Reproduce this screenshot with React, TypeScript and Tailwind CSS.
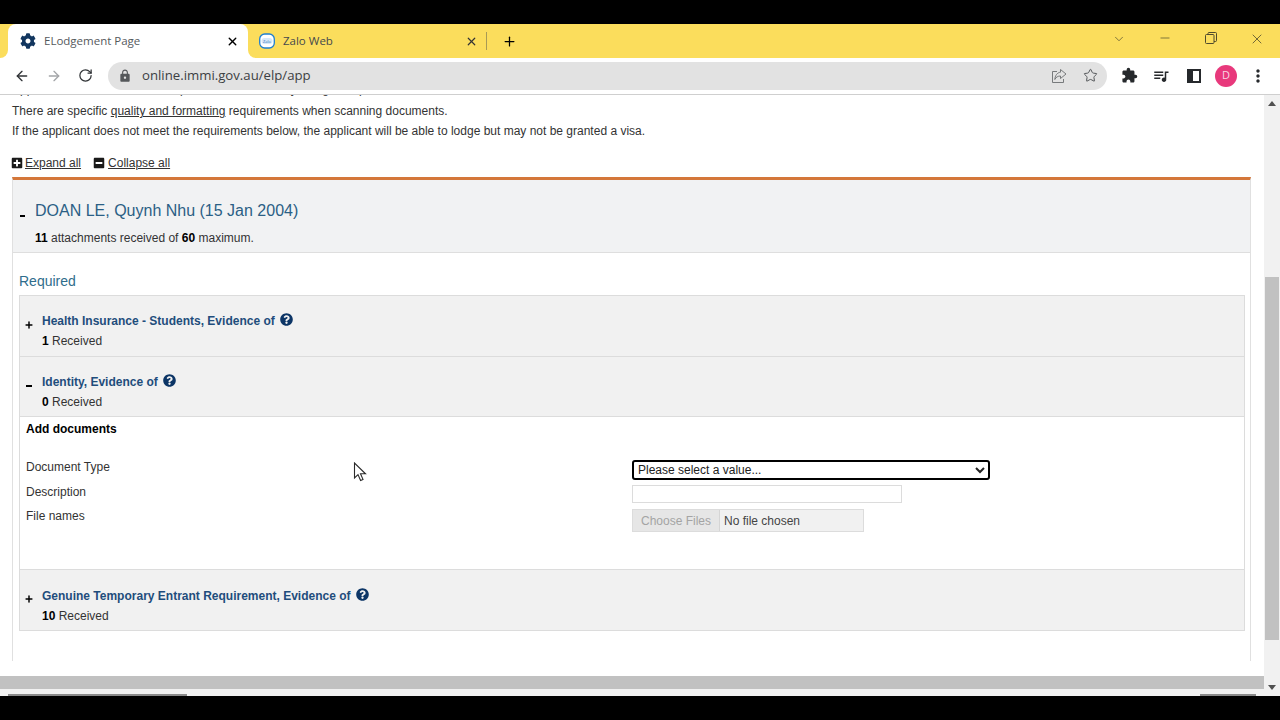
import { ArrowLeft, ArrowRight, ChevronDown, Minus, Plus, RotateCw, Star, X } from "lucide-react";
import { FaCog, FaMinusSquare, FaPlusSquare, FaQuestionCircle } from "react-icons/fa";
import { MdExtension, MdLock, MdMoreVert, MdQueueMusic } from "react-icons/md";

const CHROME_FONT = "font-['Open_Sans','Noto_Sans',sans-serif]";

function Help() {
  return <FaQuestionCircle className="ml-[5px] mt-[-2px] inline-block text-[13px] text-[#0c3566]" />;
}

function Req({
  open,
  title,
  count,
  className,
  bodyClass = "pt-4",
}: {
  open?: boolean;
  title: string;
  count: number;
  className: string;
  bodyClass?: string;
}) {
  return (
    <div className={`flex bg-[#f1f1f1] pl-[6px] ${className}`}>
      <span className="mt-5 flex w-4 shrink-0 items-start text-black">
        <span className="-ml-px mt-[3px] flex h-[9px] w-[7px] items-center justify-center">
          {open ? (
            <span className="mt-[2px] h-[2px] w-[6px] bg-black" />
          ) : (
            <Plus size={10} strokeWidth={3.5} className="mt-[2px] shrink-0" />
          )}
        </span>
      </span>
      <div className={bodyClass}>
        <div className="flex h-[17px] items-center text-xs font-bold text-[#1f4d7c]">
          {title}
          <Help />
        </div>
        <div className="mt-[4px] text-xs text-[#333]">
          <b className="text-black">{count}</b> Received
        </div>
      </div>
    </div>
  );
}

function TabBar() {
  return (
    <div className={`flex h-[34px] bg-white text-xs ${CHROME_FONT}`}>
      <div className="w-2 shrink-0 rounded-br-lg bg-[#fbdd5c]" />
      <div className="h-[34px] w-[240px] shrink-0 bg-[#fbdd5c]">
        <div className="flex h-[34px] items-center rounded-t-lg bg-white pl-[12px] pr-[9px] text-[#55595d]">
          <FaCog className="text-[16px] text-[#12365f]" />
          <span className="ml-[8px] flex-1 text-[11.5px]">ELodgement Page</span>
          <X size={13} strokeWidth={2.5} className="text-black" />
        </div>
      </div>
      <div className="flex h-[34px] flex-1 rounded-bl-lg bg-[#fbdd5c]">
        <div className="flex h-[34px] w-[238px] shrink-0 items-center pl-[11px] pr-2 text-[#45494d]">
          <svg viewBox="0 0 16 16" className="h-4 w-4">
            <rect x="0.7" y="1" width="14.6" height="14" rx="5" fill="#fff" stroke="#1f7fd0" strokeWidth="1.3" />
            <rect x="2.5" y="5" width="11" height="6" rx="3" fill="#d7e8f8" />
            <text x="8" y="9.6" textAnchor="middle" fontSize="4" fill="#1f6fc0">Zalo</text>
          </svg>
          <span className="ml-2 flex-1 text-[11.5px]">Zalo Web</span>
          <X size={13} strokeWidth={2.2} className="text-[#333]" />
        </div>
        <div className="my-[8px] h-[18px] w-px bg-[#a89a55]" />
        <div className="ml-[15px] flex items-center text-black">
          <Plus size={15} strokeWidth={2} />
        </div>
        <div className="ml-auto flex items-start text-[#4f4a2c]">
          <ChevronDown size={14} strokeWidth={1.2} className="mt-[8px] mr-[32px]" />
          <Minus size={14} strokeWidth={1.2} className="mt-[7px] mr-[33px]" />
          <svg viewBox="0 0 12 12" className="mr-[32px] mt-[8px] h-[12px] w-[12px]" fill="none" stroke="currentColor">
            <rect x="0.5" y="2.5" width="8.5" height="9" rx="1" />
            <path d="M3 2.5V1.5a1 1 0 0 1 1-1h6.5a1 1 0 0 1 1 1v7a1 1 0 0 1-1 1H9" />
          </svg>
          <X size={16} strokeWidth={1.2} className="mr-[15px] mt-[7px]" />
        </div>
      </div>
    </div>
  );
}

function Toolbar() {
  return (
    <div className={`flex h-[37px] items-center border-b border-[#cfcfcf] bg-white pb-[1px] pl-[14px] ${CHROME_FONT}`}>
      <ArrowLeft size={16} strokeWidth={2} className="text-[#303336]" />
      <ArrowRight size={16} strokeWidth={2} className="ml-4 text-[#a3a5a8]" />
      <RotateCw size={15} strokeWidth={2} className="ml-4 text-[#303336]" />
      <div className="ml-[15px] flex h-7 w-[999px] items-center rounded-full bg-[#e2e2e2] pl-[10px] pr-[9px]">
        <MdLock className="text-[14px] text-[#55585b]" />
        <span className="ml-[10px] mt-px flex-1 text-[13.2px] text-[#3c4043]">online.immi.gov.au/elp/app</span>
        <svg viewBox="0 0 16 16" className="mr-4 h-4 w-4" fill="none" stroke="#6b6e71" strokeWidth="0.9">
          <path d="M6 3.5H1.5V14.5H12.5V11" />
          <path d="M9.5 1.5L15 6L9.5 10.5V8C7 8 5 9 3.8 11.5C4 8 6 4.5 9.5 4.2Z" />
        </svg>
        <Star size={15} strokeWidth={1.6} className="text-[#55585b]" />
      </div>
      <MdExtension className="ml-[14px] text-[17px] text-[#26292c]" />
      <MdQueueMusic className="ml-[14px] text-[18px] text-[#26292c]" />
      <div className="ml-[17px] flex h-[14px] w-[14px] justify-end border-2 border-[#26292c] bg-[#26292c]">
        <span className="h-full w-[6px] bg-white" />
      </div>
      <span className="ml-[14px] flex h-[22px] w-[22px] items-center justify-center rounded-full bg-[#e8397c] text-[11px] text-[#f8d6e4]">
        D
      </span>
      <MdMoreVert className="ml-[11px] text-[20px] text-[#26292c]" />
    </div>
  );
}

function FormRow({ label, className, children }: { label: string; className: string; children: React.ReactNode }) {
  return (
    <div className={`flex items-start ${className}`}>
      <span className="w-[606px] shrink-0 text-xs text-[#333]">{label}</span>
      {children}
    </div>
  );
}

function Cursor() {
  return (
    <svg viewBox="0 0 14 20" className="absolute left-[353px] top-[367px] h-5 w-[14px]">
      <path d="M1.5 1V16L5 12.6L7.6 18.5L10 17.4L7.5 11.8H12.5Z" fill="#fff" stroke="#2a2a2a" strokeWidth="1.1" />
    </svg>
  );
}

export default function App() {
  return (
    <div className="flex h-[720px] w-[1280px] flex-col overflow-hidden bg-black font-['Liberation_Sans',Arial,sans-serif]">
      <div className="h-6 shrink-0 bg-black" />
      <TabBar />
      <Toolbar />
      <div className="relative flex h-[601px] shrink-0 bg-white">
        <div className="flex w-[1264px] shrink-0 flex-col">
          <div className="h-[581px] overflow-hidden pl-3 pr-[13px]">
            <p className="-mt-[14px] h-[18px] text-xs text-[#333]">
              Applicants should attach the requested documents by using the upload section.
            </p>
            <p className="mt-[5px] h-[14px] text-xs leading-[14px] text-[#333]">
              There are specific <u>quality and formatting</u> requirements when scanning documents.
            </p>
            <p className="mt-[6px] h-[14px] text-xs leading-[14px] text-[#333]">
              If the applicant does not meet the requirements below, the applicant will be able to lodge but may not be granted a visa.
            </p>
            <div className="mt-[18px] flex h-[14px] items-center text-xs text-[#333]">
              <FaPlusSquare className="-ml-px text-[12px] text-[#1a1a1a]" />
              <u className="ml-[2px]">Expand all</u>
              <FaMinusSquare className="ml-3 text-[12px] text-[#1a1a1a]" />
              <u className="ml-[3px]">Collapse all</u>
            </div>
            <div className="mt-[7px] h-[484px] border-x border-t-[3px] border-[#e0e0e0] border-t-[#d4773a]">
              <div className="flex h-[73px] border-b border-[#dedede] bg-[#f1f2f3] pl-[7px]">
                <span className="mt-[35px] h-[2px] w-[5px] bg-black" />
                <div className="ml-[10px] pt-5">
                  <h2 className="text-base leading-[22px] text-[#2b5f85]">DOAN LE, Quynh Nhu (15 Jan 2004)</h2>
                  <p className="mt-2 text-xs text-[#333]">
                    <b className="text-black">11</b> attachments received of <b className="text-black">60</b> maximum.
                  </p>
                </div>
              </div>
              <h3 className="ml-[6px] mt-[19px] text-sm leading-[18px] text-[#2f6d8c]">Required</h3>
              <div className="ml-[6px] mr-[5px] mt-[5px] h-[336px] border border-[#dcdcdc]">
                <Req title="Health Insurance - Students, Evidence of" count={1} className="h-[61px] border-b border-[#dcdcdc]" />
                <Req open title="Identity, Evidence of" count={0} className="h-[60px] border-b border-[#dcdcdc]" />
                <div className="h-[153px] border-b border-[#dcdcdc] bg-white pl-[6px] pt-1">
                  <h4 className="text-xs font-bold leading-[16px] text-black">Add documents</h4>
                  <FormRow label="Document Type" className="mt-[22px] h-[25px]">
                    <select className="mt-px h-5 w-[358px] rounded-[3px] border-2 border-black bg-white text-xs text-[#222]">
                      <option>Please select a value...</option>
                    </select>
                  </FormRow>
                  <FormRow label="Description" className="h-6">
                    <input disabled className="mt-px h-[18px] w-[270px] border border-[#dcdcdc] bg-white" />
                  </FormRow>
                  <FormRow label="File names" className="">
                    <input
                      type="file"
                      multiple
                      disabled
                      className="mt-px h-[23px] w-[232px] border border-[#dcdcdc] bg-[#f1f1f1] text-xs leading-[21px] text-[#444] file:mr-1 file:h-[21px] file:w-[87px] file:border-r file:border-[#d5d5d5] file:bg-[#e6e6e6] file:text-xs file:text-[#a4a4a4]"
                    />
                  </FormRow>
                </div>
                <Req title="Genuine Temporary Entrant Requirement, Evidence of" count={10} className="h-[60px]" bodyClass="pt-[17px]" />
              </div>
            </div>
          </div>
          <div className="h-[13px] bg-[#c1c1c1]" />
          <div className="flex h-[7px] items-end bg-[#f1f1f1]">
            <span className="ml-2 h-[2px] w-[179px] bg-[#8a8a8a]" />
            <span className="ml-auto mr-2 h-[2px] w-14 bg-[#8a8a8a]" />
          </div>
        </div>
        <div className="flex w-4 shrink-0 flex-col items-center bg-[#f1f1f1]">
          <span className="mt-[6px] h-0 w-0 border-x-[4px] border-b-[5px] border-x-transparent border-b-[#505050]" />
          <span className="mt-[171px] h-[363px] w-[14px] bg-[#c1c1c1]" />
          <span className="mt-[45px] h-0 w-0 border-x-[4px] border-t-[5px] border-x-transparent border-t-[#505050]" />
        </div>
        <Cursor />
      </div>
      <div className="h-6 shrink-0 bg-black" />
    </div>
  );
}
